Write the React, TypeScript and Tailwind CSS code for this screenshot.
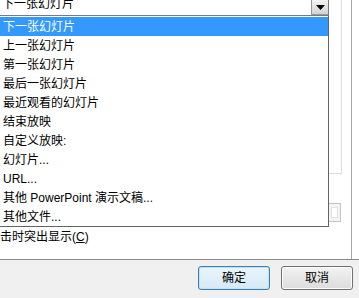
const items = [
  '下一张幻灯片',
  '上一张幻灯片',
  '第一张幻灯片',
  '最后一张幻灯片',
  '最近观看的幻灯片',
  '结束放映',
  '自定义放映:',
  '幻灯片...',
  'URL...',
  '其他 PowerPoint 演示文稿...',
  '其他文件...',
];

export default function App() {
  return (
    <div className="relative w-[359px] h-[298px] overflow-hidden bg-white text-[12px] text-black font-['Liberation_Sans','Noto_Sans_CJK_SC',sans-serif]">
      {/* dialog body */}
      <div className="h-[260px] border-b border-[#8a8a8a] shadow-[0_1px_0_#ffffff]">
        <div className="w-[352px] h-full border-r border-[#a7a7a7]">
          {/* group box */}
          <div className="w-[342px] h-[174px] border-r border-b border-[#d5dde3]">
            {/* combo */}
            <div className="flex w-[329px] h-[16px] border-b border-r border-[#7a7a7a]">
              <div className="flex-1 overflow-hidden pl-[2px]">
                <span className="block -mt-[5px] leading-[19px]">下一张幻灯片</span>
              </div>
              <div className="flex items-center justify-center w-[17px] h-[15px] border-l border-b border-[#9a9a9a] bg-gradient-to-b from-[#f4f4f4] to-[#d2d2d2]">
                <svg width="9" height="5" viewBox="0 0 9 5">
                  <path d="M0 0h9L4.5 5z" fill="#000" />
                </svg>
              </div>
            </div>
          </div>
          {/* second combo (covered by list) */}
          <div className="flex justify-end w-[341px] mt-[29px]">
            <div className="flex items-center justify-center w-[13px] h-[19px] border border-[#c4c4c4] bg-[#f4f4f4]">
              <div className="w-[7px] h-[11px] border border-[#e2e2e2] bg-white" />
            </div>
          </div>
          <div className="mt-[7px] leading-[16px]">
            击时突出显示(<span className="underline">C</span>)
          </div>
        </div>
      </div>

      {/* footer */}
      <div className="flex justify-end gap-[11px] pt-[6px] pr-[6px] h-[38px] bg-[#f0f0f0]">
        <button className="w-[72px] h-[24px] rounded-[3px] border border-[#3c7fb1] bg-gradient-to-b from-[#eaf6fd] to-[#d5e9f5] shadow-[inset_0_0_0_1px_#c2e2f4]">
          确定
        </button>
        <button className="w-[72px] h-[24px] rounded-[3px] border border-[#707070] bg-gradient-to-b from-[#f2f2f2] to-[#dcdcdc] shadow-[inset_0_0_0_1px_#fcfcfc]">
          取消
        </button>
      </div>

      {/* dropdown list */}
      <div className="absolute left-0 top-[16px] w-[329px] h-[211px] border-r border-b border-[#646464] bg-white pt-[1px]">
        {items.map((t, i) => (
          <div
            key={t}
            className={`flex items-center h-[19px] pl-[3px] ${i === 0 ? 'bg-[#3399ff] text-white' : ''}`}
          >
            {t}
          </div>
        ))}
      </div>
    </div>
  );
}
